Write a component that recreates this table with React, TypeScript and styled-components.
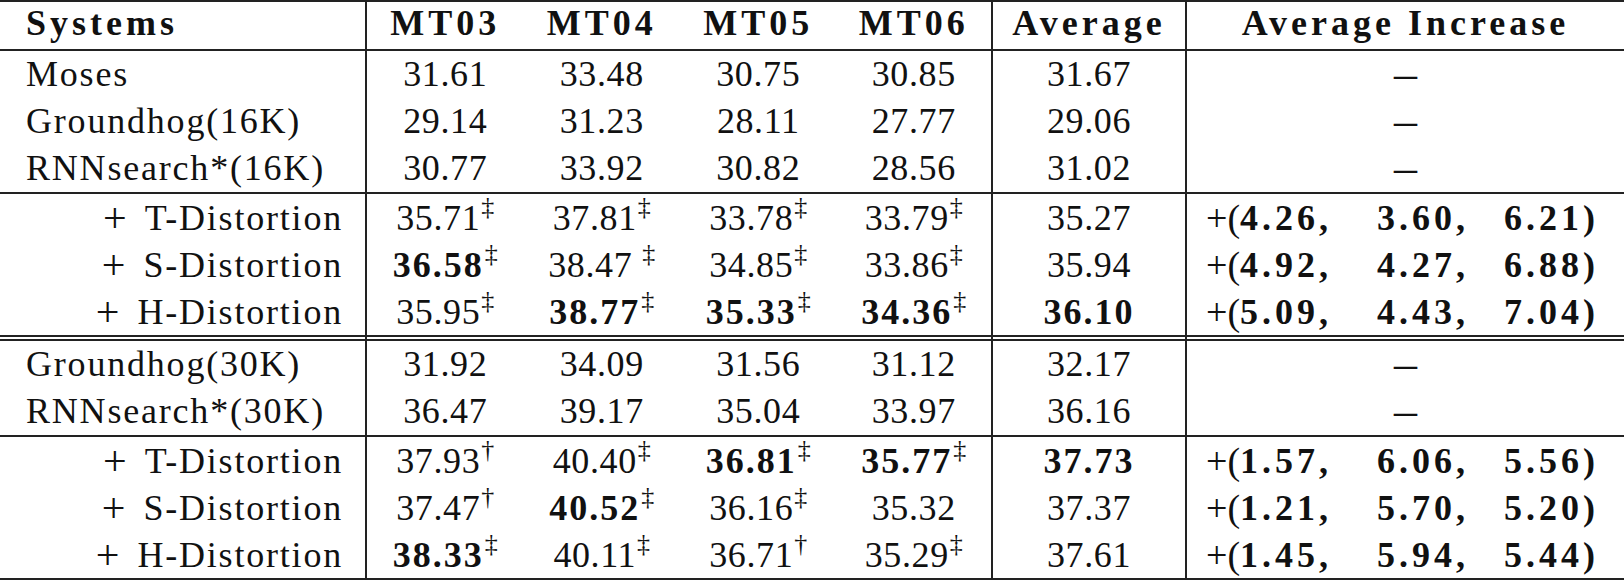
import React from 'react'
import styled, { createGlobalStyle } from 'styled-components'

const Global = createGlobalStyle`
  html, body {
    margin: 0;
    padding: 0;
    background: #fff;
  }
  body {
    font-family: 'Liberation Serif', 'Times New Roman', serif;
    color: #111;
  }
`

const Table = styled.div`
  width: 1624px;
  border-top: 2px solid #222;
  border-bottom: 2px solid #222;
  font-size: 36px;
`

const Row = styled.div<{ $head?: boolean }>`
  display: grid;
  grid-template-columns: 367px repeat(4, 156.5px) 194px 1fr;
  height: 47px;
  --lift: ${(p) => (p.$head ? 6 : 8)}px;
`

const Rule = styled.div`
  border-top: 2px solid #222;
`

const DoubleRule = styled.div`
  height: 2px;
  border-top: 2px solid #222;
  border-bottom: 2px solid #222;
`

const Cell = styled.div<{ $line?: boolean; $align?: 'left' | 'right' | 'center' }>`
  box-sizing: border-box;
  display: flex;
  align-items: center;
  justify-content: ${(p) => (p.$align === 'left' ? 'flex-start' : p.$align === 'right' ? 'flex-end' : 'center')};
  padding: 0 ${(p) => (p.$align === 'center' ? 0 : 22)}px var(--lift) ${(p) => (p.$align === 'center' ? 0 : 26)}px;
  border-right: ${(p) => (p.$line ? '2px solid #222' : 'none')};
  white-space: nowrap;
`

const Name = styled.span`
  letter-spacing: 1.8px;
`

const Plus = styled.span`
  font-size: 42px;
  margin-right: 18px;
`

const Head = styled.span`
  font-weight: 700;
  letter-spacing: 4px;
`

const Num = styled.span<{ $bold?: boolean }>`
  font-weight: ${(p) => (p.$bold ? 700 : 400)};
  letter-spacing: ${(p) => (p.$bold ? 2 : 0.6)}px;
`

const Mark = styled.span`
  display: inline-block;
  font-size: 26px;
  line-height: 1;
  vertical-align: top;
  position: relative;
  top: -3px;
  margin-left: 1px;
`

const Dash = styled.span`
  font-size: 46px;
  line-height: 1;
`

const Gain = styled.div`
  box-sizing: border-box;
  display: grid;
  grid-template-columns: 34px 137px 127px auto;
  align-items: center;
  padding: 0 0 var(--lift) 19px;
  white-space: nowrap;
`

const Open = styled.span`
  font-size: 38px;
`

const GainPart = styled.span`
  font-weight: 700;
  letter-spacing: 4px;
`

type Val = { v: string; b?: boolean; m?: string; gap?: boolean }

type Line = {
  name: string
  indent?: boolean
  vals: Val[]
  avg: Val
  gain?: [string, string, string]
}

const block1: Line[] = [
  { name: 'Moses', vals: [{ v: '31.61' }, { v: '33.48' }, { v: '30.75' }, { v: '30.85' }], avg: { v: '31.67' } },
  { name: 'Groundhog(16K)', vals: [{ v: '29.14' }, { v: '31.23' }, { v: '28.11' }, { v: '27.77' }], avg: { v: '29.06' } },
  { name: 'RNNsearch*(16K)', vals: [{ v: '30.77' }, { v: '33.92' }, { v: '30.82' }, { v: '28.56' }], avg: { v: '31.02' } },
]

const block2: Line[] = [
  {
    name: 'T-Distortion',
    indent: true,
    vals: [{ v: '35.71', m: '‡' }, { v: '37.81', m: '‡' }, { v: '33.78', m: '‡' }, { v: '33.79', m: '‡' }],
    avg: { v: '35.27' },
    gain: ['4.26,', '3.60,', '6.21)'],
  },
  {
    name: 'S-Distortion',
    indent: true,
    vals: [{ v: '36.58', m: '‡', b: true }, { v: '38.47', m: '‡', gap: true }, { v: '34.85', m: '‡' }, { v: '33.86', m: '‡' }],
    avg: { v: '35.94' },
    gain: ['4.92,', '4.27,', '6.88)'],
  },
  {
    name: 'H-Distortion',
    indent: true,
    vals: [{ v: '35.95', m: '‡' }, { v: '38.77', m: '‡', b: true }, { v: '35.33', m: '‡', b: true }, { v: '34.36', m: '‡', b: true }],
    avg: { v: '36.10', b: true },
    gain: ['5.09,', '4.43,', '7.04)'],
  },
]

const block3: Line[] = [
  { name: 'Groundhog(30K)', vals: [{ v: '31.92' }, { v: '34.09' }, { v: '31.56' }, { v: '31.12' }], avg: { v: '32.17' } },
  { name: 'RNNsearch*(30K)', vals: [{ v: '36.47' }, { v: '39.17' }, { v: '35.04' }, { v: '33.97' }], avg: { v: '36.16' } },
]

const block4: Line[] = [
  {
    name: 'T-Distortion',
    indent: true,
    vals: [{ v: '37.93', m: '†' }, { v: '40.40', m: '‡' }, { v: '36.81', m: '‡', b: true }, { v: '35.77', m: '‡', b: true }],
    avg: { v: '37.73', b: true },
    gain: ['1.57,', '6.06,', '5.56)'],
  },
  {
    name: 'S-Distortion',
    indent: true,
    vals: [{ v: '37.47', m: '†' }, { v: '40.52', m: '‡', b: true }, { v: '36.16', m: '‡' }, { v: '35.32' }],
    avg: { v: '37.37' },
    gain: ['1.21,', '5.70,', '5.20)'],
  },
  {
    name: 'H-Distortion',
    indent: true,
    vals: [{ v: '38.33', m: '‡', b: true }, { v: '40.11', m: '‡' }, { v: '36.71', m: '†' }, { v: '35.29', m: '‡' }],
    avg: { v: '37.61' },
    gain: ['1.45,', '5.94,', '5.44)'],
  },
]

const Value = ({ val }: { val: Val }) => (
  <span>
    <Num $bold={val.b}>{val.v}</Num>
    {val.gap && ' '}
    {val.m && <Mark>{val.m}</Mark>}
  </span>
)

const DataRow = ({ line }: { line: Line }) => (
  <Row>
    <Cell $line $align={line.indent ? 'right' : 'left'}>
      {line.indent && <Plus>+</Plus>}
      <Name>{line.name}</Name>
    </Cell>
    {line.vals.map((val, i) => (
      <Cell key={i} $align="center" $line={i === 3}>
        <Value val={val} />
      </Cell>
    ))}
    <Cell $align="center" $line>
      <Value val={line.avg} />
    </Cell>
    {line.gain ? (
      <Gain>
        <Open>+(</Open>
        {line.gain.map((g) => (
          <GainPart key={g}>{g}</GainPart>
        ))}
      </Gain>
    ) : (
      <Cell $align="center">
        <Dash>–</Dash>
      </Cell>
    )}
  </Row>
)

export default function App() {
  return (
    <>
      <Global />
      <Table>
        <Row $head>
          <Cell $line $align="left">
            <Head>Systems</Head>
          </Cell>
          {['MT03', 'MT04', 'MT05', 'MT06'].map((h, i) => (
            <Cell key={h} $align="center" $line={i === 3}>
              <Head>{h}</Head>
            </Cell>
          ))}
          <Cell $align="center" $line>
            <Head>Average</Head>
          </Cell>
          <Cell $align="center">
            <Head>Average Increase</Head>
          </Cell>
        </Row>
        <Rule />
        {block1.map((l) => (
          <DataRow key={l.name} line={l} />
        ))}
        <Rule />
        {block2.map((l) => (
          <DataRow key={l.name} line={l} />
        ))}
        <DoubleRule />
        {block3.map((l) => (
          <DataRow key={l.name} line={l} />
        ))}
        <Rule />
        {block4.map((l, i) => (
          <DataRow key={l.name + i} line={l} />
        ))}
      </Table>
    </>
  )
}
